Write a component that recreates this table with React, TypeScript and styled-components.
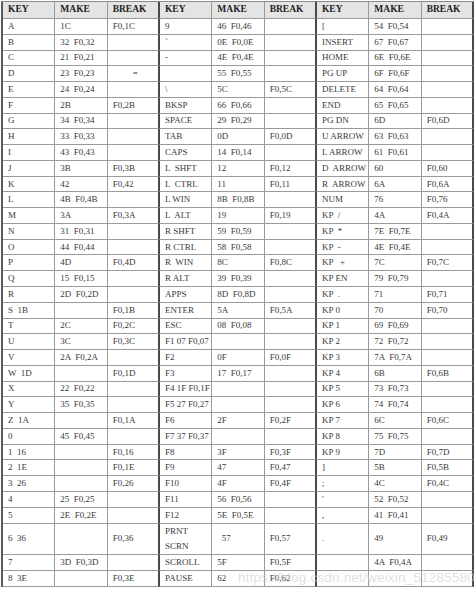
import React from "react";
import styled, { createGlobalStyle } from "styled-components";

const Global = createGlobalStyle`
  html, body { margin: 0; padding: 0; background: #ffffff; }
  body { width: 474px; height: 589px; overflow: hidden; }
`;

type Cell = string | { t: string; c?: boolean };
type Row = { cells: Cell[]; tall?: boolean };

const R = (...cells: Cell[]): Row => ({ cells });
const T = (...cells: Cell[]): Row => ({ cells, tall: true });

const rows: Row[] = [
  R("A", "1C", "F0,1C", "9", "46  F0,46", "", "[", "54  F0,54", ""),
  R("B", "32  F0,32", "", "`", "0E  F0,0E", "", "INSERT", "67  F0,67", ""),
  R("C", "21  F0,21", "", "-", "4E  F0,4E", "", "HOME", "6E  F0,6E", ""),
  R("D", "23  F0,23", { t: "=", c: true }, "", "55  F0,55", "", "PG UP", "6F  F0,6F", ""),
  R("E", "24  F0,24", "", "\\", "5C", "F0,5C", "DELETE", "64  F0,64", ""),
  R("F", "2B", "F0,2B", "BKSP", "66  F0,66", "", "END", "65  F0,65", ""),
  R("G", "34  F0,34", "", "SPACE", "29  F0,29", "", "PG DN", "6D", "F0,6D"),
  R("H", "33  F0,33", "", "TAB", "0D", "F0,0D", "U ARROW", "63  F0,63", ""),
  R("I", "43  F0,43", "", "CAPS", "14  F0,14", "", "L ARROW", "61  F0,61", ""),
  R("J", "3B", "F0,3B", "L  SHFT", "12", "F0,12", "D  ARROW", "60", "F0,60"),
  R("K", "42", "F0,42", "L  CTRL", "11", "F0,11", "R  ARROW", "6A", "F0,6A"),
  R("L", "4B  F0,4B", "", "L WIN", "8B  F0,8B", "", "NUM", "76", "F0,76"),
  R("M", "3A", "F0,3A", "L  ALT", "19", "F0,19", "KP  /", "4A", "F0,4A"),
  R("N", "31  F0,31", "", "R SHFT", "59  F0,59", "", "KP  *", "7E  F0,7E", ""),
  R("O", "44  F0,44", "", "R CTRL", "58  F0,58", "", "KP  -", "4E  F0,4E", ""),
  R("P", "4D", "F0,4D", "R  WIN", "8C", "F0,8C", "KP   +", "7C", "F0,7C"),
  R("Q", "15  F0,15", "", "R ALT", "39  F0,39", "", "KP EN", "79  F0,79", ""),
  R("R", "2D  F0,2D", "", "APPS", "8D  F0,8D", "", "KP  .", "71", "F0,71"),
  R("S  1B", "", "F0,1B", "ENTER", "5A", "F0,5A", "KP 0", "70", "F0,70"),
  R("T", "2C", "F0,2C", "ESC", "08  F0,08", "", "KP 1", "69  F0,69", ""),
  R("U", "3C", "F0,3C", "F1 07 F0,07", "", "", "KP 2", "72  F0,72", ""),
  R("V", "2A  F0,2A", "", "F2", "0F", "F0,0F", "KP 3", "7A  F0,7A", ""),
  R("W  1D", "", "F0,1D", "F3", "17  F0,17", "", "KP 4", "6B", "F0,6B"),
  R("X", "22  F0,22", "", "F4 1F F0,1F", "", "", "KP 5", "73  F0,73", ""),
  R("Y", "35  F0,35", "", "F5 27 F0,27", "", "", "KP 6", "74  F0,74", ""),
  R("Z  1A", "", "F0,1A", "F6", "2F", "F0,2F", "KP 7", "6C", "F0,6C"),
  R("0", "45  F0,45", "", "F7 37 F0,37", "", "", "KP 8", "75  F0,75", ""),
  R("1  16", "", "F0,16", "F8", "3F", "F0,3F", "KP 9", "7D", "F0,7D"),
  R("2  1E", "", "F0,1E", "F9", "47", "F0,47", "]", "5B", "F0,5B"),
  R("3  26", "", "F0,26", "F10", "4F", "F0,4F", ";", "4C", "F0,4C"),
  R("4", "25  F0,25", "", "F11", "56  F0,56", "", "'", "52  F0,52", ""),
  R("5", "2E  F0,2E", "", "F12", "5E  F0,5E", "", ",", "41  F0,41", ""),
  T("6  36", "", "F0,36", "PRNT\nSCRN", "  57", "F0,57", ".", "49", "F0,49"),
  R("7", "3D  F0,3D", "", "SCROLL", "5F", "F0,5F", "", "4A  F0,4A", ""),
  R("8  3E", "", "F0,3E", "PAUSE", "62", "F0,62", "", "", ""),
];

const Page = styled.div`
  position: relative;
  padding: 1px 0 0 1px;
  width: 474px;
  box-sizing: border-box;
`;

const Grid = styled.div`
  display: grid;
  grid-template-columns: repeat(9, 1fr);
  grid-template-rows: 17px repeat(36, 15.78px);
  border-left: 2px solid #5a5a5a;
  border-top: 1px solid #8a8a8a;
  font-family: "Liberation Serif", "Times New Roman", serif;
  font-size: 9px;
  color: #3a3a3a;
`;

const CellBox = styled.div<{ $sep: boolean; $head?: boolean; $tall?: boolean; $center?: boolean }>`
  box-sizing: border-box;
  display: flex;
  align-items: center;
  justify-content: ${(p) => (p.$center ? "center" : "flex-start")};
  padding: 0 0 0 5px;
  border-right: ${(p) => (p.$sep ? "2px solid #4a4a4a" : "1px solid #9a9a9a")};
  border-bottom: 1px solid #9a9a9a;
  grid-row: ${(p) => (p.$tall ? "span 2" : "auto")};
  background: ${(p) => (p.$head ? "#e4e4e4" : "#ffffff")};
  font-weight: ${(p) => (p.$head ? 700 : 400)};
  color: ${(p) => (p.$head ? "#222222" : "#3a3a3a")};
  font-size: ${(p) => (p.$head ? "9.5px" : "9px")};
  white-space: pre;
  overflow: hidden;
  line-height: ${(p) => (p.$tall ? "15px" : "1")};
`;

const Watermark = styled.div`
  position: absolute;
  left: 238px;
  top: 570px;
  font-family: "Liberation Sans", Arial, sans-serif;
  font-size: 13.5px;
  color: rgba(210, 210, 210, 0.7);
  letter-spacing: 0.2px;
  pointer-events: none;
  white-space: nowrap;
`;

const heads = ["KEY", "MAKE", "BREAK", "KEY", "MAKE", "BREAK", "KEY", "MAKE", "BREAK"];

export default function App() {
  return (
    <>
      <Global />
      <Page>
        <Grid>
          {heads.map((h, i) => (
            <CellBox key={"h" + i} $head $sep={i === 2 || i === 5 || i === 8}>
              {h}
            </CellBox>
          ))}
          {rows.map((row, ri) =>
            row.cells.map((c, ci) => {
              const cell = typeof c === "string" ? { t: c } : c;
              return (
                <CellBox
                  key={ri + "-" + ci}
                  $sep={ci === 2 || ci === 5 || ci === 8}
                  $tall={row.tall}
                  $center={cell.c}
                >
                  {cell.t}
                </CellBox>
              );
            })
          )}
        </Grid>
        <Watermark>https://blog.csdn.net/weixin_51285580</Watermark>
      </Page>
    </>
  );
}
